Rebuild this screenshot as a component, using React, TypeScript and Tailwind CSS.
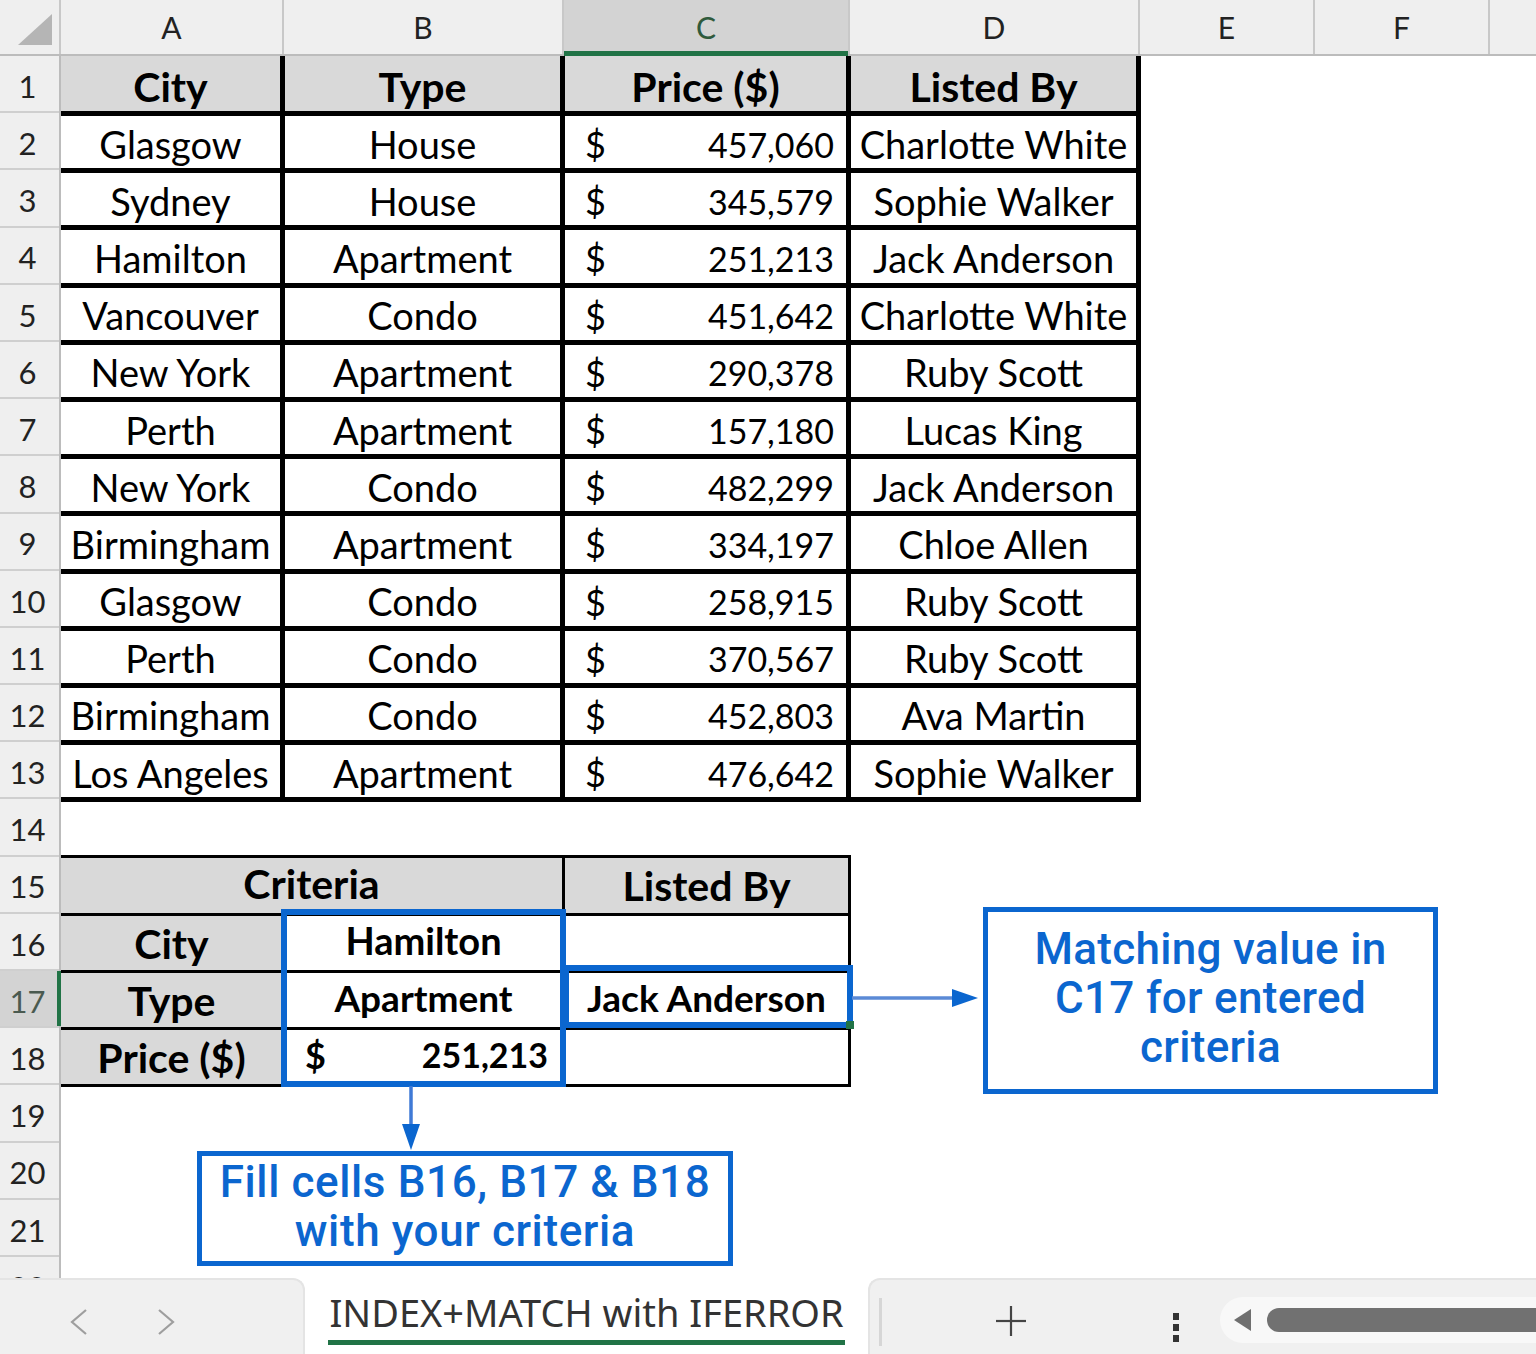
import React from 'react';

const rows: [string, string, string, string][] = [
  ['Glasgow', 'House', '457,060', 'Charlotte White'],
  ['Sydney', 'House', '345,579', 'Sophie Walker'],
  ['Hamilton', 'Apartment', '251,213', 'Jack Anderson'],
  ['Vancouver', 'Condo', '451,642', 'Charlotte White'],
  ['New York', 'Apartment', '290,378', 'Ruby Scott'],
  ['Perth', 'Apartment', '157,180', 'Lucas King'],
  ['New York', 'Condo', '482,299', 'Jack Anderson'],
  ['Birmingham', 'Apartment', '334,197', 'Chloe Allen'],
  ['Glasgow', 'Condo', '258,915', 'Ruby Scott'],
  ['Perth', 'Condo', '370,567', 'Ruby Scott'],
  ['Birmingham', 'Condo', '452,803', 'Ava Martin'],
  ['Los Angeles', 'Apartment', '476,642', 'Sophie Walker'],
];

function ColumnHeader() {
  return (
    <div className="flex h-[56px] bg-[#efefef] border-b-2 border-[#bcbcbc] text-[30px] text-[#222]">
      <div className="relative w-[61px] shrink-0 border-r-2 border-[#c8c8c8]">
        <svg className="absolute left-[16px] top-[12px]" width="38" height="34" viewBox="0 0 38 34">
          <polygon points="2,33 36,2 36,33" fill="#b5b5b5" />
        </svg>
      </div>
      <div className="w-[223px] shrink-0 border-r-2 border-[#c8c8c8] flex items-center justify-center">A</div>
      <div className="w-[280px] shrink-0 border-r-2 border-[#c8c8c8] flex items-center justify-center">B</div>
      <div className="relative w-[286px] shrink-0 border-r-2 border-[#c8c8c8] bg-[#d3d3d3] text-[#2f5a3c] flex items-center justify-center">
        C
        <span className="absolute left-0 right-0 -bottom-[2px] h-[5px] bg-[#217346]" />
      </div>
      <div className="w-[290px] shrink-0 border-r-2 border-[#c8c8c8] flex items-center justify-center">D</div>
      <div className="w-[175px] shrink-0 border-r-2 border-[#c8c8c8] flex items-center justify-center">E</div>
      <div className="w-[175px] shrink-0 border-r-2 border-[#c8c8c8] flex items-center justify-center">F</div>
      <div className="flex-1" />
    </div>
  );
}

function RowHeader() {
  const nums = Array.from({ length: 22 }, (_, i) => i + 1);
  return (
    <div className="w-[61px] shrink-0 bg-[#efefef] border-r-2 border-[#bcbcbc] text-[31px] text-[#222]">
      {nums.map((n) =>
        n === 17 ? (
          <div key={n} className="relative h-[57.2px] border-b-2 border-[#cfcfcf] bg-[#d3d3d3] text-[#4a5a50] flex items-center justify-center pt-[5px] pr-[4px]">
            {n}
            <span className="absolute top-0 bottom-0 -right-[2px] w-[4px] bg-[#217346]" />
          </div>
        ) : (
          <div key={n} className="h-[57.2px] border-b-2 border-[#cfcfcf] flex items-center justify-center pt-[5px] pr-[4px]">
            {n}
          </div>
        )
      )}
    </div>
  );
}

function MainTable() {
  return (
    <div className="grid w-fit grid-cols-[219px_275px_281px_285px] grid-rows-[55px_repeat(12,52.2px)] gap-[5px] bg-black pb-[5px] pr-[5px] text-[38px]">
      {['City', 'Type', 'Price ($)', 'Listed By'].map((h) => (
        <div key={h} className="bg-[#d9d9d9] font-bold text-[41px] flex items-center justify-center pt-[6px]">
          {h}
        </div>
      ))}
      {rows.map((r, i) => (
        <React.Fragment key={i}>
          <div className="bg-white flex items-center justify-center pt-[4px] whitespace-nowrap">{r[0]}</div>
          <div className="bg-white flex items-center justify-center pt-[4px]">{r[1]}</div>
          <div className="bg-white flex items-center justify-between pl-[20px] pr-[12px] pt-[4px]">
            <span className="text-[36px]">$</span>
            <span className="text-[34px]">{r[2]}</span>
          </div>
          <div className="bg-white flex items-center justify-center pt-[4px] whitespace-nowrap">{r[3]}</div>
        </React.Fragment>
      ))}
    </div>
  );
}

function CriteriaTable() {
  return (
    <div className="mt-[53px] grid w-fit grid-cols-[221px_277px_283px] grid-rows-[55px_54px_54px_54px] gap-[3px] bg-black pt-[3px] pr-[3px] pb-[3px] font-bold">
      <div className="col-span-2 bg-[#d9d9d9] text-[41px] flex items-center justify-center pb-[4px]">Criteria</div>
      <div className="bg-[#d9d9d9] text-[41px] flex items-center justify-center">Listed By</div>
      <div className="bg-[#d9d9d9] text-[41px] flex items-center justify-center">City</div>
      <div className="bg-white text-[38px] flex items-center justify-center pb-[5px]">Hamilton</div>
      <div className="bg-white" />
      <div className="bg-[#d9d9d9] text-[41px] flex items-center justify-center">Type</div>
      <div className="bg-white text-[37px] flex items-center justify-center pb-[5px]">Apartment</div>
      <div className="bg-white text-[37px] flex items-center justify-center pb-[5px]">Jack Anderson</div>
      <div className="bg-[#d9d9d9] text-[41px] flex items-center justify-center">Price ($)</div>
      <div className="bg-white flex items-center justify-between pl-[20px] pr-[14px] pb-[5px]">
        <span className="text-[36px]">$</span>
        <span className="text-[34px]">251,213</span>
      </div>
      <div className="bg-white" />
    </div>
  );
}

function TabBar() {
  return (
    <div className="flex h-[76px] bg-white">
      <div className="relative w-[305px] shrink-0 bg-[#f0f0f0] rounded-tr-[12px] border-t-2 border-r-2 border-[#e4e4e4]">
        <svg className="absolute left-[68px] top-[28px]" width="22" height="28" viewBox="0 0 22 28">
          <polyline points="18,2 4,14 18,26" fill="none" stroke="#9e9e9e" strokeWidth="2.2" />
        </svg>
        <svg className="absolute left-[155px] top-[28px]" width="22" height="28" viewBox="0 0 22 28">
          <polyline points="4,2 18,14 4,26" fill="none" stroke="#9e9e9e" strokeWidth="2.2" />
        </svg>
      </div>
      <div className="w-[563px] shrink-0 bg-white flex flex-col items-center pt-[10px]">
        <span className="font-['Noto_Sans',sans-serif] text-[38px] leading-[48px] text-[#333] whitespace-nowrap">INDEX+MATCH with IFERROR</span>
        <span className="mt-[4px] h-[5px] w-[517px] bg-[#217346]" />
      </div>
      <div className="relative flex-1 bg-[#f0f0f0] rounded-tl-[12px] border-t-2 border-l-2 border-[#e4e4e4]">
        <span className="absolute left-[9px] top-[18px] h-[48px] w-[3px] bg-[#d6d6d6]" />
        <svg className="absolute left-[125px] top-[25px]" width="32" height="32" viewBox="0 0 32 32">
          <line x1="16" y1="1" x2="16" y2="31" stroke="#444" strokeWidth="2.2" />
          <line x1="1" y1="16" x2="31" y2="16" stroke="#444" strokeWidth="2.2" />
        </svg>
        <div className="absolute left-[303px] top-[33px] flex flex-col gap-[4px]">
          <span className="h-[7px] w-[6px] bg-[#333]" />
          <span className="h-[7px] w-[6px] bg-[#333]" />
          <span className="h-[7px] w-[6px] bg-[#333]" />
        </div>
        <div className="absolute left-[350px] top-[17px] right-0 h-[46px] rounded-l-full bg-[#f8f8f8] flex items-center">
          <svg className="ml-[12px]" width="20" height="24" viewBox="0 0 20 24">
            <polygon points="19,1 2,12 19,23" fill="#6f6f6f" />
          </svg>
          <span className="ml-[15px] h-[24px] flex-1 rounded-l-full bg-[#717171]" />
        </div>
      </div>
    </div>
  );
}

export default function App() {
  const blue = '#0b66cf';
  return (
    <div className="relative w-[1536px] h-[1354px] overflow-hidden bg-white font-['Lato',sans-serif] text-black">
      <ColumnHeader />
      <div className="flex h-[1222px] overflow-hidden">
        <RowHeader />
        <div className="flex flex-col">
          <MainTable />
          <CriteriaTable />
        </div>
      </div>
      <TabBar />

      {/* selection outlines */}
      <div className="absolute left-[281px] top-[909px] w-[285px] h-[178px] border-[6px] border-[#0b66cf]" />
      <div className="absolute left-[563px] top-[965px] w-[290px] h-[63px] border-[6px] border-[#0b66cf]" />
      <div className="absolute left-[846px] top-[1021px] w-[8px] h-[8px] bg-[#217346]" />

      {/* arrows */}
      <svg className="absolute left-[852px] top-[986px]" width="128" height="24" viewBox="0 0 128 24">
        <line x1="0" y1="12" x2="106" y2="12" stroke="#5b8ad6" strokeWidth="3.5" />
        <polygon points="100,3 126,12 100,21" fill={blue} />
      </svg>
      <svg className="absolute left-[399px] top-[1086px]" width="24" height="66" viewBox="0 0 24 66">
        <line x1="12" y1="0" x2="12" y2="44" stroke="#3f7ad6" strokeWidth="3.5" />
        <polygon points="3,38 12,64 21,38" fill={blue} />
      </svg>

      {/* callouts */}
      <div className="absolute left-[983px] top-[907px] w-[455px] h-[187px] border-[5px] border-[#0b66cf] bg-white flex items-center justify-center">
        <p className="font-['Roboto',sans-serif] font-medium text-[44px] leading-[49px] text-[#0b66cf] text-center tracking-[0.3px] pb-[4px]">
          Matching value in
          <br />
          C17 for entered
          <br />
          criteria
        </p>
      </div>
      <div className="absolute left-[197px] top-[1151px] w-[536px] h-[115px] border-[5px] border-[#0b66cf] bg-white flex items-center justify-center">
        <p className="font-['Roboto',sans-serif] font-medium text-[44px] leading-[49px] text-[#0b66cf] text-center tracking-[0.6px] pb-[4px] whitespace-nowrap">
          Fill cells B16, B17 &amp; B18
          <br />
          with your criteria
        </p>
      </div>
    </div>
  );
}
